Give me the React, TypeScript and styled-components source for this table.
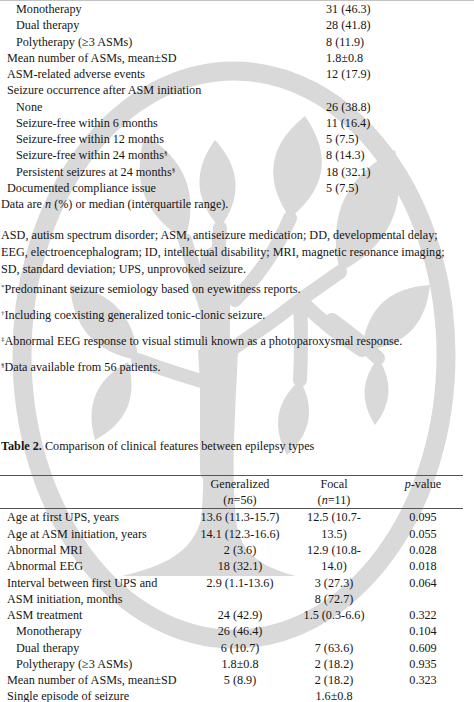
import React from "react";
import styled, { createGlobalStyle } from "styled-components";

const GlobalStyle = createGlobalStyle`
  html, body {
    margin: 0;
    padding: 0;
    background: #ffffff;
  }
  body {
    font-family: "Liberation Serif", "Times New Roman", serif;
    color: #161616;
  }
`;

const Page = styled.div`
  position: relative;
  width: 474px;
  height: 702px;
  overflow: hidden;
  font-size: 12.2px;
`;

const Watermark = styled.svg`
  position: absolute;
  left: 0;
  top: 0;
  width: 474px;
  height: 702px;
  z-index: 0;
`;

const Content = styled.div`
  position: relative;
  z-index: 1;
`;

const Table1 = styled.div`
  border-top: 1px solid #c2c2c2;
`;

const Row1 = styled.div`
  display: grid;
  grid-template-columns: 326px 1fr;
  height: 16.27px;
  line-height: 16.27px;
  white-space: nowrap;
`;

const Label = styled.div<{ $indent?: number }>`
  padding-left: ${(p) => p.$indent ?? 7}px;
`;

const Note = styled.div`
  padding-left: 1px;
  height: 16.27px;
  line-height: 16.27px;
  white-space: nowrap;
`;

const Para = styled.p<{ $top: number }>`
  margin: ${(p) => p.$top}px 0 0 0;
  padding-left: 1px;
  line-height: 17px;
  white-space: nowrap;
`;

const Sup = styled.sup`
  font-size: 7px;
  line-height: 0;
  vertical-align: 4px;
`;

const Caption = styled.p`
  margin: 62px 0 0 0;
  padding-left: 1px;
  line-height: 17px;
  b {
    font-weight: bold;
  }
`;

const Table2 = styled.div`
  margin-top: 20px;
  width: 463px;
  border-top: 1px solid #555;
`;

const Head = styled.div`
  border-bottom: 1px solid #555;
`;

const Row2 = styled.div<{ $h?: number }>`
  display: grid;
  grid-template-columns: 195px 90px 98px 80px;
  height: ${(p) => p.$h ?? 16.27}px;
  line-height: ${(p) => p.$h ?? 16.27}px;
  white-space: nowrap;
`;

const Cell = styled.div`
  text-align: center;
`;

const table1: [string, string, number][] = [
  ["Monotherapy", "31 (46.3)", 16],
  ["Dual therapy", "28 (41.8)", 16],
  ["Polytherapy (≥3 ASMs)", "8 (11.9)", 16],
  ["Mean number of ASMs, mean±SD", "1.8±0.8", 7],
  ["ASM-related adverse events", "12 (17.9)", 7],
  ["Seizure occurrence after ASM initiation", "", 7],
  ["None", "26 (38.8)", 16],
  ["Seizure-free within 6 months", "11 (16.4)", 16],
  ["Seizure-free within 12 months", "5 (7.5)", 16],
  ["Seizure-free within 24 months§", "8 (14.3)", 16],
  ["Persistent seizures at 24 months§", "18 (32.1)", 16],
  ["Documented compliance issue", "5 (7.5)", 7],
];

const table2: [string, string, string, string, number][] = [
  ["Age at first UPS, years", "13.6 (11.3-15.7)", "12.5 (10.7-", "0.095", 7],
  ["Age at ASM initiation, years", "14.1 (12.3-16.6)", "13.5)", "0.055", 7],
  ["Abnormal MRI", "2 (3.6)", "12.9 (10.8-", "0.028", 7],
  ["Abnormal EEG", "18 (32.1)", "14.0)", "0.018", 7],
  ["Interval between first UPS and", "2.9 (1.1-13.6)", "3 (27.3)", "0.064", 7],
  ["ASM initiation, months", "", "8 (72.7)", "", 7],
  ["ASM treatment", "24 (42.9)", "1.5 (0.3-6.6)", "0.322", 7],
  ["Monotherapy", "26 (46.4)", "", "0.104", 16],
  ["Dual therapy", "6 (10.7)", "7 (63.6)", "0.609", 16],
  ["Polytherapy (≥3 ASMs)", "1.8±0.8", "2 (18.2)", "0.935", 16],
  ["Mean number of ASMs, mean±SD", "5 (8.9)", "2 (18.2)", "0.323", 7],
  ["Single episode of seizure", "", "1.6±0.8", "", 7],
];

// pointed leaf from base to tip
function leaf(x1: number, y1: number, x2: number, y2: number, hw: number) {
  const dx = x2 - x1;
  const dy = y2 - y1;
  const len = Math.hypot(dx, dy);
  const nx = (-dy / len) * hw * 2;
  const ny = (dx / len) * hw * 2;
  const mx = (x1 + x2) / 2;
  const my = (y1 + y2) / 2;
  return `M${x1} ${y1} Q${mx + nx} ${my + ny} ${x2} ${y2} Q${mx - nx} ${my - ny} ${x1} ${y1}Z`;
}

const leaves: [number, number, number, number, number][] = [
  [185, 240, 145, 135, 22],
  [220, 228, 215, 140, 18],
  [290, 218, 305, 116, 24],
  [340, 272, 395, 150, 26],
  [362, 350, 430, 285, 20],
  [138, 360, 70, 285, 20],
  [128, 362, 95, 440, 17],
  [300, 380, 287, 455, 15],
  [378, 358, 375, 425, 12],
];

const branches = [
  "M215 470 L215 262",
  "M215 385 Q170 372 138 360",
  "M215 335 Q198 282 185 240",
  "M215 300 Q218 262 220 228",
  "M235 300 Q272 262 290 218",
  "M215 360 Q262 330 300 300 L340 272",
  "M300 300 Q330 330 362 350",
  "M300 300 Q302 340 300 380",
  "M332 320 Q360 340 378 358",
];

const Tree: React.FC = () => (
  <Watermark viewBox="0 0 474 702">
    <g fill="#d9d9d9" stroke="none">
      <ellipse
        cx="234"
        cy="355"
        rx="212"
        ry="284"
        fill="none"
        stroke="#d9d9d9"
        strokeWidth="19"
      />
      <path d="M198 350 C202 420 206 470 201 520 C192 552 165 566 122 576 L296 576 C258 566 240 552 236 520 C231 470 235 420 238 350 Z" />
      {branches.map((d, i) => (
        <path
          key={i}
          d={d}
          fill="none"
          stroke="#d9d9d9"
          strokeWidth={i === 0 ? 30 : 14}
          strokeLinecap="round"
        />
      ))}
      {leaves.map((l, i) => (
        <path key={i} d={leaf(...l)} />
      ))}
    </g>
  </Watermark>
);

function withSup(text: string) {
  if (!text.endsWith("§")) return text;
  return (
    <>
      {text.slice(0, -1)}
      <Sup>§</Sup>
    </>
  );
}

const App: React.FC = () => {
  return (
    <Page>
      <GlobalStyle />
      <Tree />
      <Content>
        <Table1>
          {table1.map(([label, value, indent]) => (
            <Row1 key={label}>
              <Label $indent={indent}>{withSup(label)}</Label>
              <div>{value}</div>
            </Row1>
          ))}
        </Table1>
        <Note>
          Data are <i>n</i> (%) or median (interquartile range).
        </Note>
        <Para $top={15}>
          ASD, autism spectrum disorder; ASM, antiseizure medication; DD, developmental delay;
          <br />
          EEG, electroencephalogram; ID, intellectual disability; MRI, magnetic resonance imaging;
          <br />
          SD, standard deviation; UPS, unprovoked seizure.
        </Para>
        <Para $top={3}>
          <Sup>*</Sup>Predominant seizure semiology based on eyewitness reports.
        </Para>
        <Para $top={9}>
          <Sup>†</Sup>Including coexisting generalized tonic-clonic seizure.
        </Para>
        <Para $top={9}>
          <Sup>‡</Sup>Abnormal EEG response to visual stimuli known as a photoparoxysmal response.
        </Para>
        <Para $top={9}>
          <Sup>§</Sup>Data available from 56 patients.
        </Para>
        <Caption>
          <b>Table 2.</b> Comparison of clinical features between epilepsy types
        </Caption>
        <Table2>
          <Head>
            <Row2 $h={16}>
              <div />
              <Cell>Generalized</Cell>
              <Cell>Focal</Cell>
              <Cell>
                <i>p</i>-value
              </Cell>
            </Row2>
            <Row2 $h={16}>
              <div />
              <Cell>
                (<i>n</i>=56)
              </Cell>
              <Cell>
                (<i>n</i>=11)
              </Cell>
              <div />
            </Row2>
          </Head>
          {table2.map(([label, gen, focal, p, indent]) => (
            <Row2 key={label + gen}>
              <Label $indent={indent}>{label}</Label>
              <Cell>{gen}</Cell>
              <Cell>{focal}</Cell>
              <Cell>{p}</Cell>
            </Row2>
          ))}
        </Table2>
      </Content>
    </Page>
  );
};

export default App;
